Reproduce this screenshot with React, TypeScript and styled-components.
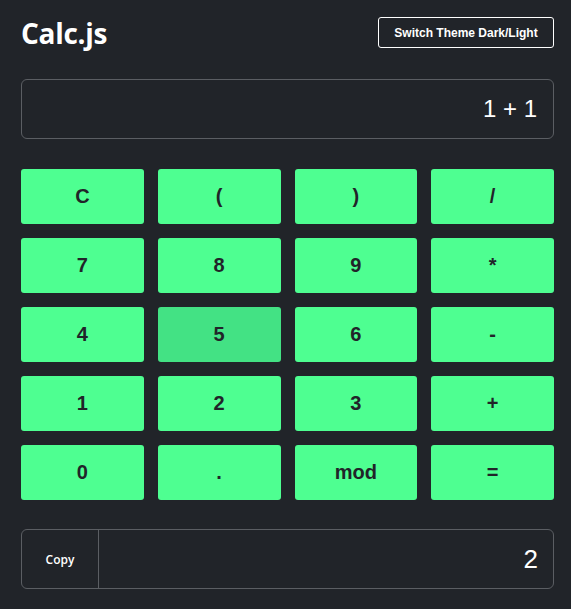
import { useState } from 'react';
import styled, { createGlobalStyle } from 'styled-components';

const GlobalStyle = createGlobalStyle`
	body {
		margin: 0;
		background-color: #212429;
		font-family: 'Liberation Sans', Arial, sans-serif;
	}
`;

const KEYS = ['C', '(', ')', '/', '7', '8', '9', '*', '4', '5', '6', '-', '1', '2', '3', '+', '0', '.', 'mod', '='];

const App = () => {
	const [expression] = useState('1 + 1');
	const [result] = useState('2');

	return (
		<>
			<GlobalStyle />
			<Wrapper>
				<Header>
					<Title>Calc.js</Title>
					<ThemeButton>Switch Theme Dark/Light</ThemeButton>
				</Header>
				<Display>{expression}</Display>
				<Keypad>
					{KEYS.map((key) => (
						<Key key={key} $active={key === '5'}>
							{key}
						</Key>
					))}
				</Keypad>
				<ResultBox>
					<CopyButton>Copy</CopyButton>
					<ResultValue>{result}</ResultValue>
				</ResultBox>
			</Wrapper>
		</>
	);
};

export default App;

const Wrapper = styled.div`
	width: 533px;
	padding: 17px 0 20px 21px;
	display: flex;
	flex-direction: column;
`;

const Header = styled.header`
	display: flex;
	justify-content: space-between;
	align-items: center;
	height: 31px;
	margin-bottom: 31px;
`;

const Title = styled.h1`
	margin: 0;
	font-family: 'Open Sans', sans-serif;
	font-size: 28px;
	font-weight: 700;
	color: #ffffff;
	letter-spacing: -0.3px;
`;

const ThemeButton = styled.button`
	height: 31px;
	width: 176px;
	border: 1px solid #ffffff;
	border-radius: 3px;
	background: transparent;
	color: #ffffff;
	font-family: 'Liberation Sans', Arial, sans-serif;
	font-size: 12px;
	font-weight: bold;
	padding: 0;
	cursor: pointer;
`;

const Display = styled.div`
	height: 60px;
	box-sizing: border-box;
	border: 1px solid #5b5e63;
	border-radius: 6px;
	display: flex;
	align-items: center;
	justify-content: flex-end;
	padding: 0 16px;
	color: #ffffff;
	font-size: 24px;
	margin-bottom: 30px;
`;

const Keypad = styled.div`
	display: grid;
	grid-template-columns: repeat(4, 1fr);
	grid-auto-rows: 55px;
	gap: 14px;
	margin-bottom: 29px;
`;

const Key = styled.button<{ $active?: boolean }>`
	border: none;
	border-radius: 3px;
	background-color: ${({ $active }) => ($active ? '#43e284' : '#4eff91')};
	color: #212429;
	font-family: 'Liberation Sans', Arial, sans-serif;
	font-size: 20px;
	font-weight: bold;
	cursor: pointer;
	&:hover {
		filter: brightness(95%);
	}
`;

const ResultBox = styled.div`
	height: 60px;
	box-sizing: border-box;
	border: 1px solid #5b5e63;
	border-radius: 6px;
	display: flex;
	align-items: stretch;
`;

const CopyButton = styled.button`
	width: 77px;
	border: none;
	border-right: 1px solid #5b5e63;
	background: transparent;
	color: #ffffff;
	font-family: 'Open Sans', sans-serif;
	font-size: 12px;
	font-weight: 600;
	padding: 0;
	cursor: pointer;
`;

const ResultValue = styled.div`
	flex: 1;
	display: flex;
	align-items: center;
	justify-content: flex-end;
	padding: 0 15px;
	color: #ffffff;
	font-size: 26px;
`;
